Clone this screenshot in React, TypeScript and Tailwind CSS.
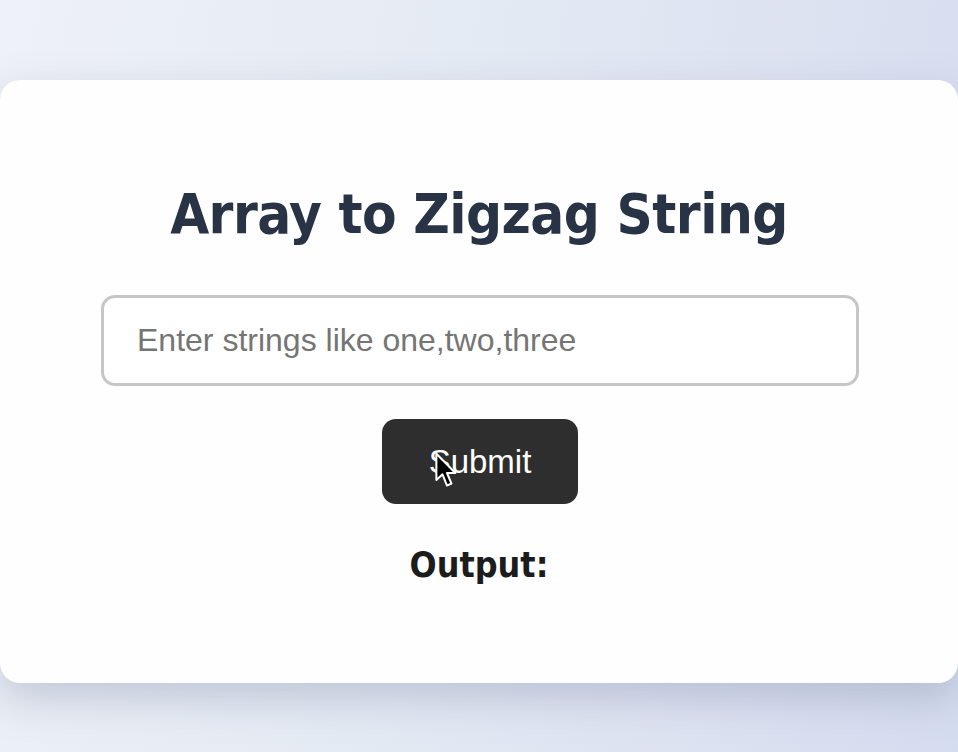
import React from "react";

function Cursor() {
  return (
    <svg width="26" height="38" viewBox="0 0 22 34" className="absolute left-[434px] top-[452px] pointer-events-none">
      <path d="M1.5 1.5 L1.5 25 L7 20 L11 30 L15 28.3 L11 18.8 L18.5 18.8 Z" fill="#000" stroke="#fff" strokeWidth="1.8" strokeLinejoin="round" />
    </svg>
  );
}

export default function App() {
  return (
    <div className="relative w-[958px] h-[752px] overflow-hidden bg-[linear-gradient(100deg,#eef1f7_0%,#e3e9f3_50%,#d4dcef_100%)]">
      <div className="pt-[80px]">
        <div className="h-[603px] rounded-[20px] bg-[#fefefe] shadow-[0_16px_40px_rgba(120,130,160,0.35)] flex flex-col items-center pt-[106px]">
          <h1 className="text-[56px] leading-none font-bold text-[#283445] tracking-[-0.5px] [font-family:'DejaVu_Sans_Condensed','DejaVu_Sans',sans-serif]">
            Array to Zigzag String
          </h1>
          <input
            type="text"
            placeholder="Enter strings like one,two,three"
            className="mt-[53px] ml-[2px] w-[758px] h-[91px] rounded-[14px] border-[3px] border-[#c6c6c6] bg-white pl-[33px] text-[32px] text-[#333] placeholder:text-[#757575] outline-none [font-family:'Liberation_Sans',Arial,sans-serif]"
          />
          <button className="mt-[33px] ml-[2px] w-[196px] h-[85px] rounded-[14px] bg-[#2e2e2e] text-white text-[33px] [font-family:'Liberation_Sans',Arial,sans-serif]">
            Submit
          </button>
          <h2 className="mt-[43px] text-[35.5px] leading-none font-bold text-[#1c1c1c] [font-family:'DejaVu_Sans_Condensed','DejaVu_Sans',sans-serif]">
            Output:
          </h2>
        </div>
      </div>
      <Cursor />
    </div>
  );
}
